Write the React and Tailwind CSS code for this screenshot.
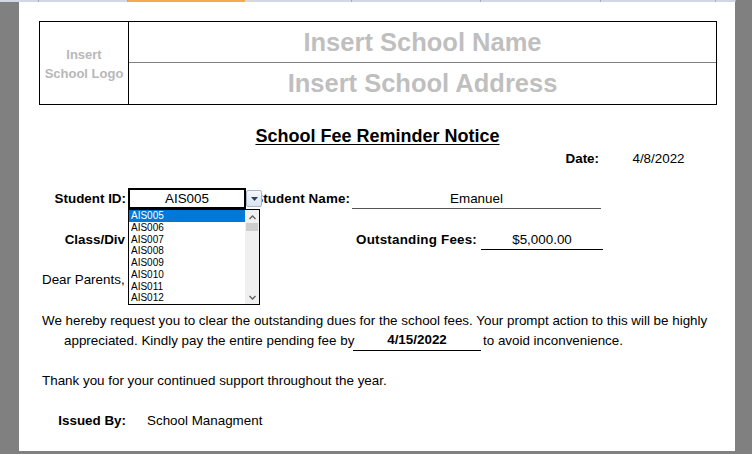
const ids = ["AIS005", "AIS006", "AIS007", "AIS008", "AIS009", "AIS010", "AIS011", "AIS012"];

function TopStrip() {
	return (
		<div className="flex h-[2px] bg-[#cfd8e4]">
			<div className="w-[39px] border-r border-[#9fb0c6]" />
			<div className="w-[89px] border-r border-[#9fb0c6]" />
			<div className="w-[117px] bg-[#f4a94c]" />
			<div className="w-[107px] border-r border-[#9fb0c6]" />
			<div className="w-[129px] border-r border-[#9fb0c6]" />
			<div className="w-[120px] border-r border-[#9fb0c6]" />
			<div className="w-[115px] border-r border-[#9fb0c6]" />
			<div className="w-[20px] border-r border-[#9fb0c6]" />
			<div className="flex-1 bg-[#808080]" />
		</div>
	);
}

function Dropdown() {
	return (
		<div className="absolute left-[109px] top-[21px] w-[132px] h-[96px] bg-white border border-black flex z-10">
			<div className="flex-1 flex flex-col">
				{ids.map((id, key) => (
					<div
						key={key}
						className={
							key === 0
								? "h-[11.75px] leading-[12px] pl-[2px] text-[10px] bg-[#0078d7] text-white"
								: "h-[11.75px] leading-[12px] pl-[2px] text-[10px] text-black"
						}
					>
						{id}
					</div>
				))}
			</div>
			<div className="w-[14px] bg-[#f0f0f0] flex flex-col items-center">
				<svg width="9" height="9" viewBox="0 0 9 9" className="mt-[3px]">
					<path d="M1.5 6 L4.5 3 L7.5 6" fill="none" stroke="#606060" strokeWidth="1.3" />
				</svg>
				<div className="w-[12px] h-[8px] mt-[1px] bg-[#cdcdcd]" />
				<div className="flex-1" />
				<svg width="9" height="9" viewBox="0 0 9 9" className="mb-[2px]">
					<path d="M1.5 3 L4.5 6 L7.5 3" fill="none" stroke="#606060" strokeWidth="1.3" />
				</svg>
			</div>
		</div>
	);
}

export default function App() {
	return (
		<div className="w-[752px] h-[454px] bg-[#808080] flex flex-col overflow-hidden font-['Liberation_Sans',Arial,sans-serif] text-[13.4px] text-black">
			<TopStrip />
			<div className="flex flex-1">
				<div className="w-[19px]" />
				<div className="w-[716px] bg-white">
					{/* header */}
					<div className="ml-[20px] mt-[19px] w-[678px] h-[84px] border border-black flex">
						<div className="w-[89px] border-r border-black flex flex-col items-center justify-center text-[13px] font-bold text-[#b8b8b8] leading-[19px] pt-[1px]">
							<div>Insert</div>
							<div>School Logo</div>
						</div>
						<div className="flex-1 flex flex-col">
							<div className="h-[41px] border-b border-[#7f7f7f] flex items-center justify-center text-[25.5px] font-bold text-[#bfbfbf]">
								Insert School Name
							</div>
							<div className="flex-1 flex items-center justify-center text-[25.5px] font-bold text-[#bfbfbf]">
								Insert School Address
							</div>
						</div>
					</div>

					{/* title */}
					<div className="ml-[20px] mt-[21px] w-[677px] h-[20px] flex items-center justify-center">
						<span className="text-[18px] font-bold underline underline-offset-2">School Fee Reminder Notice</span>
					</div>

					{/* date */}
					<div className="mt-[2px] h-[20px] flex items-center pt-[2px]">
						<div className="w-[582px] pr-[2px] text-right font-bold">Date:</div>
						<div className="w-[115px] text-center">4/8/2022</div>
					</div>

					{/* student row */}
					<div className="mt-[20px] h-[21px] flex items-center relative">
						<div className="w-[109px] pr-[2px] pt-[2px] text-right font-bold">Student ID:</div>
						<div className="w-[118px] h-[21px] border-2 border-black flex items-center justify-center pt-[1px]">AIS005</div>
						<div className="w-[106px] pr-[2px] pt-[2px] text-right font-bold tracking-[0.1px]">Student Name:</div>
						<div className="w-[249px] h-[21px] border-b border-[#555] flex items-center justify-center pt-[2px]">Emanuel</div>
						<div className="absolute left-[227px] top-[2px] w-[16px] h-[17px] border border-[#a7b6cb] rounded-[2px] bg-gradient-to-b from-[#f6f8fb] to-[#dbe3ee] flex items-center justify-center">
							<svg width="7" height="4" viewBox="0 0 7 4">
								<path d="M0 0 L7 0 L3.5 4 Z" fill="#2b3f66" />
							</svg>
						</div>
						<Dropdown />
					</div>

					{/* class row */}
					<div className="mt-[21px] h-[20px] flex items-center">
						<div className="w-[109px] pr-[3px] pt-[1px] text-right font-bold">Class/Div</div>
						<div className="w-[224px]" />
						<div className="w-[129px] pr-[4px] pt-[1px] text-right font-bold tracking-[0.2px]">Outstanding Fees:</div>
						<div className="w-[122px] h-[20px] border-b border-black flex items-center justify-center pt-[1px]">$5,000.00</div>
					</div>

					{/* dear */}
					<div className="mt-[20px] h-[20px] flex items-center pl-[23px]">Dear Parents,</div>

					{/* paragraph */}
					<div className="mt-[21px] h-[20px] flex items-center pl-[23px] whitespace-nowrap">
						We hereby request you to clear the outstanding dues for the school fees. Your prompt action to this will be highly
					</div>
					<div className="h-[20px] flex items-center whitespace-nowrap">
						<div className="w-[334px] pl-[45px]">appreciated. Kindly pay the entire pending fee by</div>
						<div className="w-[128px] h-[20px] border-b border-black flex items-center justify-center font-bold">4/15/2022</div>
						<div className="pl-[2px]">to avoid inconvenience.</div>
					</div>

					{/* thanks */}
					<div className="mt-[20px] h-[20px] flex items-center pl-[23px]">
						Thank you for your continued support throughout the year.
					</div>

					{/* issued */}
					<div className="mt-[20px] h-[20px] flex items-center">
						<div className="w-[109px] pr-[2px] text-right font-bold">Issued By:</div>
						<div className="pl-[19px]">School Managment</div>
					</div>
				</div>
				<div className="flex-1" />
			</div>
			<div className="h-[3px]" />
		</div>
	);
}
